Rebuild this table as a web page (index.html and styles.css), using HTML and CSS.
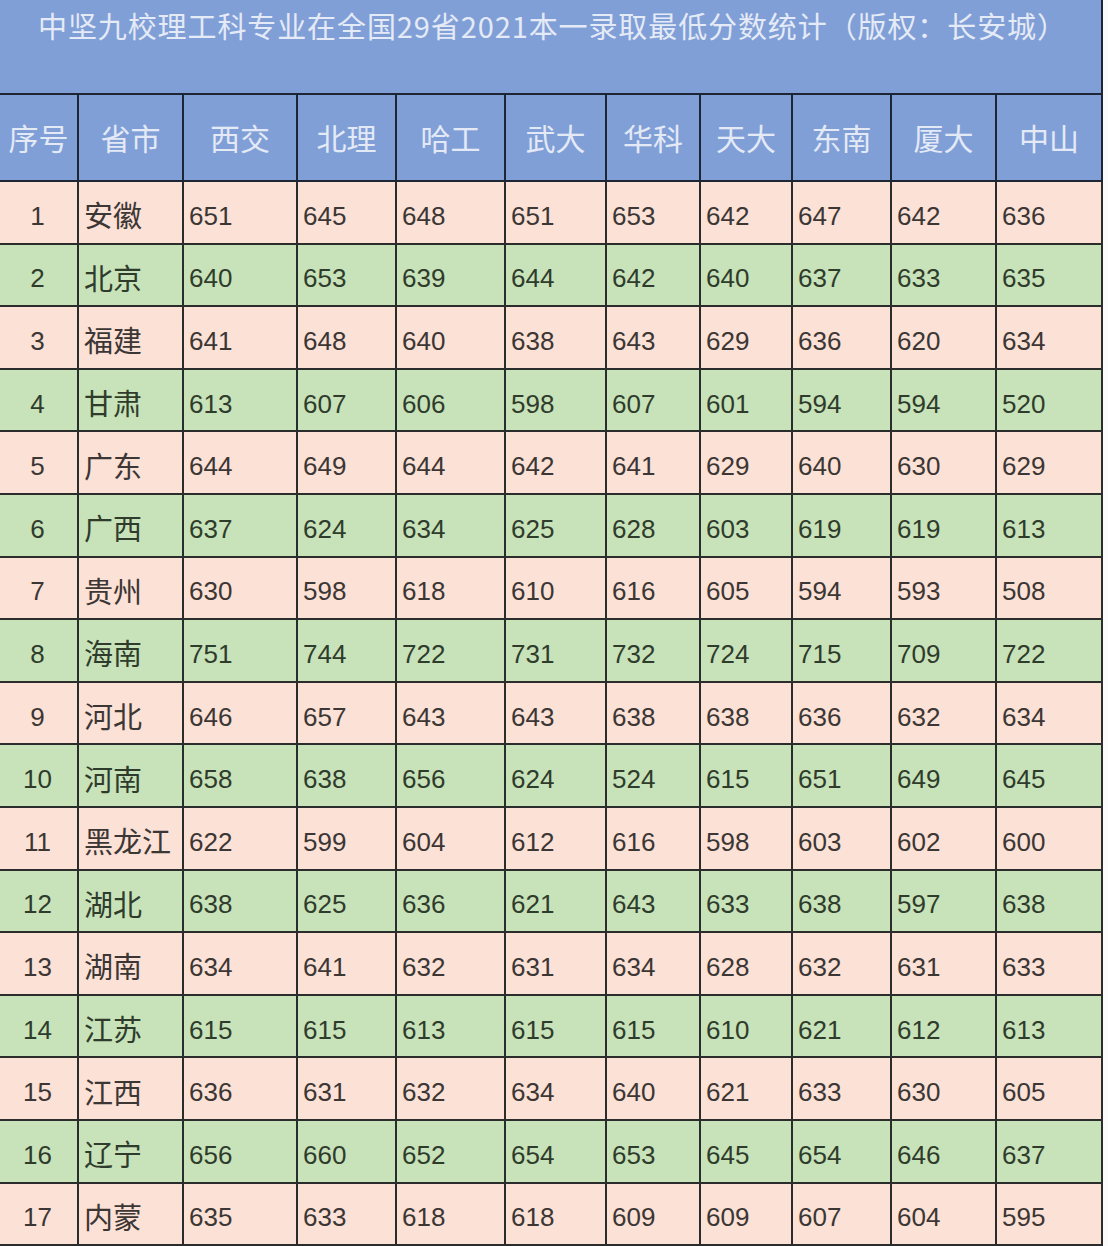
FILE: index.html
```html
<!DOCTYPE html>
<html lang="zh-CN">
<head>
<meta charset="utf-8">
<title>中坚九校理工科专业在全国29省2021本一录取最低分数统计</title>
<link rel="stylesheet" href="styles.css">
</head>
<body>
<table class="sheet">
  <colgroup>
    <col class="c-no"><col class="c-prov"><col class="c-1"><col class="c-2"><col class="c-3"><col class="c-4"><col class="c-5"><col class="c-6"><col class="c-7"><col class="c-8"><col class="c-9">
  </colgroup>
  <thead>
    <tr class="title-row"><th colspan="11" class="title">中坚九校理工科专业在全国29省2021本一录取最低分数统计（版权：长安城）</th></tr>
    <tr class="head-row"><th>序号</th><th>省市</th><th>西交</th><th>北理</th><th>哈工</th><th>武大</th><th>华科</th><th>天大</th><th>东南</th><th>厦大</th><th>中山</th></tr>
  </thead>
  <tbody>
    <tr class="pink"><td class="no">1</td><td class="prov">安徽</td><td>651</td><td>645</td><td>648</td><td>651</td><td>653</td><td>642</td><td>647</td><td>642</td><td>636</td></tr>
    <tr class="green"><td class="no">2</td><td class="prov">北京</td><td>640</td><td>653</td><td>639</td><td>644</td><td>642</td><td>640</td><td>637</td><td>633</td><td>635</td></tr>
    <tr class="pink"><td class="no">3</td><td class="prov">福建</td><td>641</td><td>648</td><td>640</td><td>638</td><td>643</td><td>629</td><td>636</td><td>620</td><td>634</td></tr>
    <tr class="green"><td class="no">4</td><td class="prov">甘肃</td><td>613</td><td>607</td><td>606</td><td>598</td><td>607</td><td>601</td><td>594</td><td>594</td><td>520</td></tr>
    <tr class="pink"><td class="no">5</td><td class="prov">广东</td><td>644</td><td>649</td><td>644</td><td>642</td><td>641</td><td>629</td><td>640</td><td>630</td><td>629</td></tr>
    <tr class="green"><td class="no">6</td><td class="prov">广西</td><td>637</td><td>624</td><td>634</td><td>625</td><td>628</td><td>603</td><td>619</td><td>619</td><td>613</td></tr>
    <tr class="pink"><td class="no">7</td><td class="prov">贵州</td><td>630</td><td>598</td><td>618</td><td>610</td><td>616</td><td>605</td><td>594</td><td>593</td><td>508</td></tr>
    <tr class="green"><td class="no">8</td><td class="prov">海南</td><td>751</td><td>744</td><td>722</td><td>731</td><td>732</td><td>724</td><td>715</td><td>709</td><td>722</td></tr>
    <tr class="pink"><td class="no">9</td><td class="prov">河北</td><td>646</td><td>657</td><td>643</td><td>643</td><td>638</td><td>638</td><td>636</td><td>632</td><td>634</td></tr>
    <tr class="green"><td class="no">10</td><td class="prov">河南</td><td>658</td><td>638</td><td>656</td><td>624</td><td>524</td><td>615</td><td>651</td><td>649</td><td>645</td></tr>
    <tr class="pink"><td class="no">11</td><td class="prov">黑龙江</td><td>622</td><td>599</td><td>604</td><td>612</td><td>616</td><td>598</td><td>603</td><td>602</td><td>600</td></tr>
    <tr class="green"><td class="no">12</td><td class="prov">湖北</td><td>638</td><td>625</td><td>636</td><td>621</td><td>643</td><td>633</td><td>638</td><td>597</td><td>638</td></tr>
    <tr class="pink"><td class="no">13</td><td class="prov">湖南</td><td>634</td><td>641</td><td>632</td><td>631</td><td>634</td><td>628</td><td>632</td><td>631</td><td>633</td></tr>
    <tr class="green"><td class="no">14</td><td class="prov">江苏</td><td>615</td><td>615</td><td>613</td><td>615</td><td>615</td><td>610</td><td>621</td><td>612</td><td>613</td></tr>
    <tr class="pink"><td class="no">15</td><td class="prov">江西</td><td>636</td><td>631</td><td>632</td><td>634</td><td>640</td><td>621</td><td>633</td><td>630</td><td>605</td></tr>
    <tr class="green"><td class="no">16</td><td class="prov">辽宁</td><td>656</td><td>660</td><td>652</td><td>654</td><td>653</td><td>645</td><td>654</td><td>646</td><td>637</td></tr>
    <tr class="pink"><td class="no">17</td><td class="prov">内蒙</td><td>635</td><td>633</td><td>618</td><td>618</td><td>609</td><td>609</td><td>607</td><td>604</td><td>595</td></tr>
  </tbody>
</table>
</body>
</html>
```
FILE: styles.css
```css
html, body {
  margin: 0;
  padding: 0;
  background: #fbfbfb;
}

body {
  font-family: "Liberation Sans", "Noto Sans CJK SC", sans-serif;
  overflow: hidden;
}

.sheet {
  table-layout: fixed;
  border-collapse: separate;
  border-spacing: 0;
  width: 1103px;
}

.c-no { width: 79px; }
.c-prov { width: 105px; }
.c-1 { width: 114px; }
.c-2 { width: 99px; }
.c-3 { width: 109px; }
.c-4 { width: 101px; }
.c-5 { width: 94px; }
.c-6 { width: 92px; }
.c-7 { width: 99px; }
.c-8 { width: 105px; }
.c-9 { width: 106px; }

.sheet th,
.sheet td {
  box-sizing: border-box;
  padding: 0;
  border-right: 2px solid #1e2535;
  border-bottom: 2px solid #1e2535;
  overflow: hidden;
  white-space: nowrap;
}

.title-row {
  height: 95px;
}

.title {
  background: #819fd7;
  color: #e4eaf6;
  font-family: "Noto Sans CJK SC", sans-serif;
  font-weight: 400;
  font-size: 29px;
  line-height: 38px;
  text-align: left;
  vertical-align: top;
  padding: 6px 0 0 38px !important;
  letter-spacing: 0.9px;
}

.head-row {
  height: 87px;
}

.head-row th {
  background: #819fd7;
  color: #e3eaf6;
  font-family: "Noto Sans CJK SC", sans-serif;
  font-weight: 400;
  font-size: 30px;
  text-align: center;
  vertical-align: middle;
  padding-bottom: 2px;
}

.sheet tbody tr {
  height: 62.6px;
}

.sheet td {
  font-size: 26px;
  text-align: left;
  vertical-align: middle;
  padding: 8px 0 0 5px;
  border-color: #2a2d2c;
}

.sheet td.no {
  text-align: center;
  padding-left: 0;
  padding-right: 2px;
}

.sheet td.prov {
  font-family: "Noto Sans CJK SC", sans-serif;
  font-size: 29px;
  padding-top: 4px;
}

.pink td {
  background: #fbe1d6;
  color: #3c3634;
}

.green td {
  background: #c8e2b9;
  color: #2f3c2c;
}
```
